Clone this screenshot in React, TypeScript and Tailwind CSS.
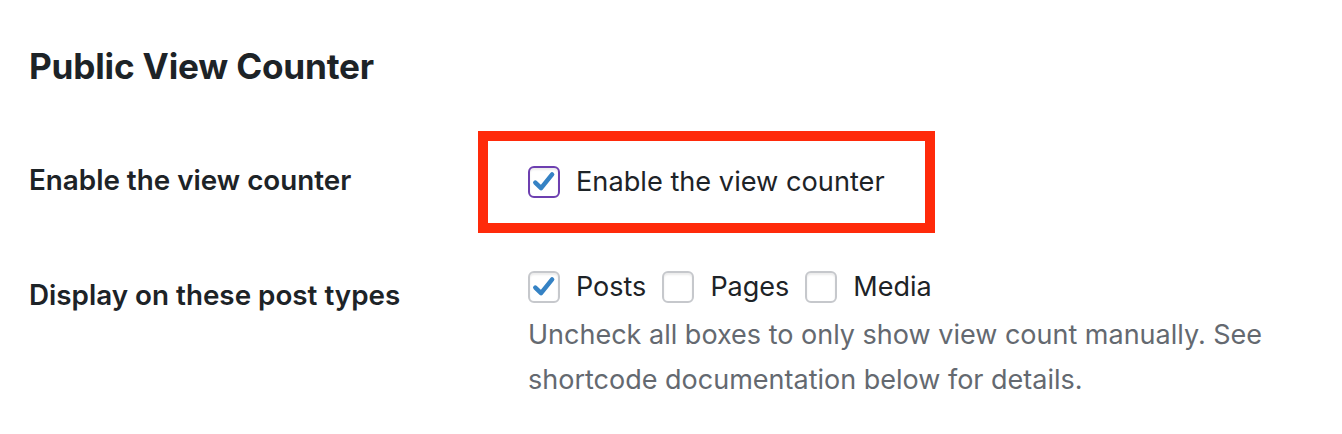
import { useState } from "react";

// ── Checkbox ──────────────────────────────────────────────────────────────────

function Box({ checked, focused }: { checked: boolean; focused?: boolean }) {
  return (
    <span
      className={
        focused
          ? "flex h-[32px] w-[32px] shrink-0 items-center justify-center rounded-[6px] border-[2px] border-[#6d3fb0] bg-white shadow-[inset_0_2px_2px_rgba(0,0,0,0.08)]"
          : "flex h-[32px] w-[32px] shrink-0 items-center justify-center rounded-[6px] border-[2px] border-[#c6c8cc] bg-white shadow-[inset_0_2px_2px_rgba(0,0,0,0.08)]"
      }
    >
      {checked && (
        <svg viewBox="0 0 20 20" className="h-[28px] w-[28px]">
          <path
            d="M3.8 10.4 L7.9 14.4 L15.8 4.6"
            fill="none"
            stroke="#3582c4"
            strokeWidth="3.2"
            strokeLinecap="round"
            strokeLinejoin="round"
          />
        </svg>
      )}
    </span>
  );
}

function Check({ label, initial, focused }: { label: string; initial: boolean; focused?: boolean }) {
  const [on, setOn] = useState(initial);
  return (
    <label className="flex cursor-pointer items-center gap-[16px]" onClick={() => setOn(!on)}>
      <Box checked={on} focused={focused} />
      <span>{label}</span>
    </label>
  );
}

// ── Page ──────────────────────────────────────────────────────────────────────

export default function App() {
  return (
    <div className="h-[434px] w-[1342px] bg-white font-['Inter',sans-serif] text-[#1d2327]">
      <div className="px-[29px] pt-[46px]">
        <h2 className="text-[35.2px] font-bold leading-[40px] tracking-[-0.2px]">Public View Counter</h2>

        {/* Row 1 */}
        <div className="mt-[45px] flex">
          <div className="w-[449px] pt-[35px] text-[27.8px] font-semibold leading-[28px]">Enable the view counter</div>
          <div className="border-[10px] border-[#ff2a0a] px-[40px] py-[23px]">
            <div className="text-[27.2px] leading-[36px]">
              <Check label="Enable the view counter" initial focused />
            </div>
          </div>
        </div>

        {/* Row 2 */}
        <div className="mt-[38px] flex">
          <div className="w-[499px] pt-[10px] text-[27.8px] font-semibold leading-[28px]">Display on these post types</div>
          <div className="text-[27px] leading-[32px]">
            <div className="flex items-center gap-[16px]">
              <Check label="Posts" initial />
              <Check label="Pages" initial={false} />
              <Check label="Media" initial={false} />
            </div>
            <p className="mt-[9px] text-[27px] leading-[45px] text-[#646970]">
              Uncheck all boxes to only show view count manually. See
              <br />
              shortcode documentation below for details.
            </p>
          </div>
        </div>
      </div>
    </div>
  );
}
